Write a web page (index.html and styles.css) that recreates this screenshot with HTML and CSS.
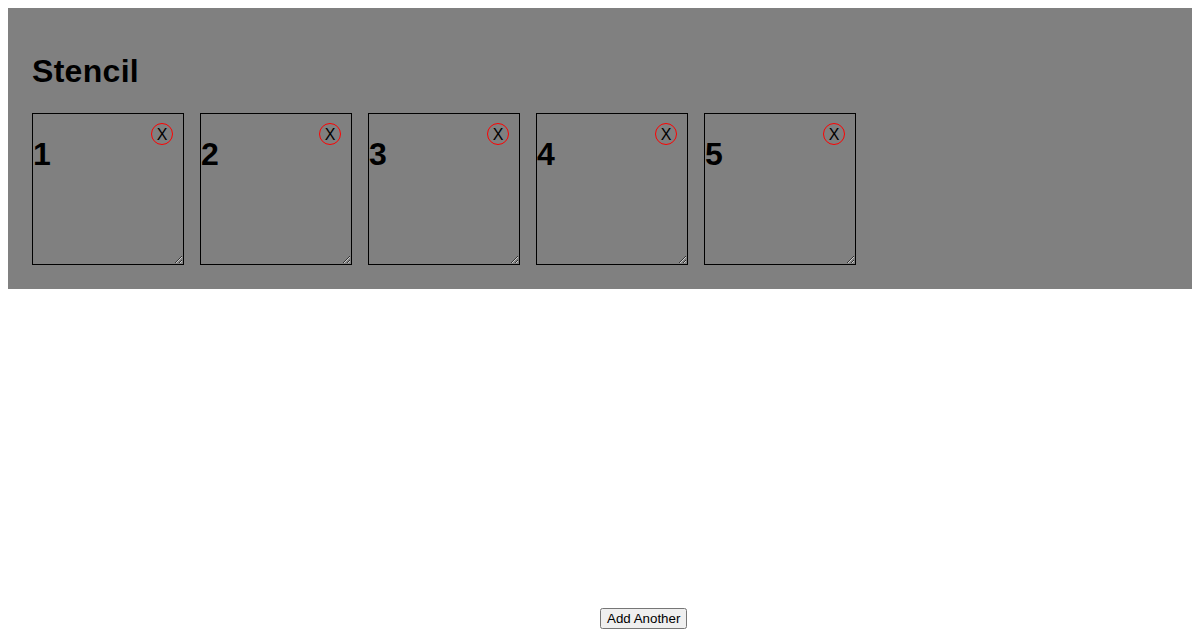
FILE: index.html
```html
<!DOCTYPE html>
<html>
<head>
<meta charset="utf-8">
<title>Stencil</title>
<link rel="stylesheet" href="styles.css">
</head>
<body>
<section class="stencil">
  <h1 class="title">Stencil</h1>
  <div class="cards">
    <div class="card"><span class="close">X</span><h1 class="num">1</h1></div>
    <div class="card"><span class="close">X</span><h1 class="num">2</h1></div>
    <div class="card"><span class="close">X</span><h1 class="num">3</h1></div>
    <div class="card"><span class="close">X</span><h1 class="num">4</h1></div>
    <div class="card"><span class="close">X</span><h1 class="num">5</h1></div>
  </div>
</section>
<div class="actions">
  <button class="add" type="button">Add Another</button>
</div>
</body>
</html>
```

FILE: styles.css
```css
html, body {
  margin: 0;
  padding: 0;
}
body {
  margin: 8px;
  font-family: "Liberation Sans", Arial, sans-serif;
  color: #000;
  background: #fff;
}
.stencil {
  background: #808080;
  padding: 24px;
}
.title {
  font-size: 32px;
  font-weight: bold;
  letter-spacing: 0.3px;
  margin: 21px 0 23px;
  line-height: 37px;
}
.cards {
  display: flex;
  gap: 16px;
}
.card {
  position: relative;
  width: 150px;
  height: 150px;
  border: 1px solid #000;
  resize: both;
  overflow: hidden;
}
.num {
  font-size: 32px;
  font-weight: bold;
  margin: 22px 0 0;
  line-height: 37px;
}
.close {
  position: absolute;
  top: 9px;
  right: 10px;
  width: 20px;
  height: 20px;
  border: 1px solid #ff0000;
  border-radius: 50%;
  font-size: 16px;
  line-height: 21px;
  text-align: center;
}
.actions {
  margin-top: 319px;
  padding-left: 50%;
}
.add {
  font-family: "Liberation Sans", Arial, sans-serif;
  font-size: 13.33px;
  padding: 1px 5px;
  margin: 0;
}
```
